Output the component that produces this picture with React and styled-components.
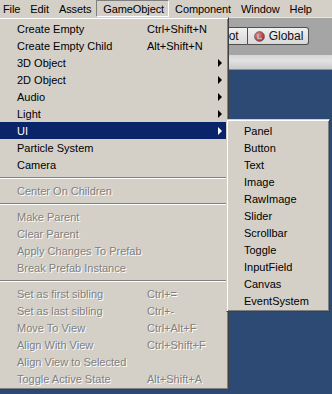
import styled, { createGlobalStyle } from "styled-components"

const GlobalStyle = createGlobalStyle`
  html, body {
    margin: 0;
    padding: 0;
    background: #2d4a74;
  }
  body {
    font-family: "Liberation Sans", Arial, sans-serif;
    font-size: 11px;
  }
`

const Page = styled.div`
  position: relative;
  width: 332px;
  height: 394px;
  overflow: hidden;
  display: flex;
  flex-direction: column;
  background: #2d4a74;
`

const MenuBar = styled.div`
  height: 17px;
  display: flex;
  align-items: stretch;
  margin-left: -2px;
  background: #d4d0c8;
  border-bottom: 1px solid #e8e6e2;
  letter-spacing: -0.1px;
`

const BarItem = styled.div`
  display: flex;
  align-items: center;
  padding: 0 4px;
  color: #000;
  border: 1px solid transparent;
  ${(p) =>
    p.$open &&
    `
    border-color: #808080 #ffffff #ffffff #808080;
    padding: 0 4px 0 6px;
    margin-right: 1px;
  `}
`

const Toolbar = styled.div`
  height: 37px;
  display: flex;
  align-items: flex-start;
  padding-top: 9px;
  padding-left: 203px;
  box-sizing: border-box;
  background: #a5a5a5;
`

const ButtonGroup = styled.div`
  display: flex;
  height: 18px;
`

const ToolButton = styled.div`
  display: flex;
  align-items: center;
  gap: 4px;
  padding: ${(p) => (p.$icon ? "0 5px 0 6px" : "0 8px")};
  color: #111;
  font-size: 12px;
  background: linear-gradient(#f0f0f0, #d8d8d8);
  border: 1px solid #505050;
  border-left: ${(p) => (p.$joined ? "none" : "1px solid #505050")};
  border-radius: ${(p) => (p.$joined ? "0 3px 3px 0" : "3px 0 0 3px")};
`

const SceneStrip = styled.div`
  height: 14px;
  background: linear-gradient(#d6d6d6, #e2e2e2 40%, #cacaca);
  border-bottom: 1px solid #8e8e8e;
`

const SceneView = styled.div`
  flex: 1;
  background: #2d4a74;
`

const Menu = styled.div`
  position: absolute;
  top: ${(p) => p.$top}px;
  left: ${(p) => p.$left}px;
  width: ${(p) => p.$width}px;
  padding: 2px;
  background: #d4d0c8;
  border: 1px solid;
  border-color: #d4d0c8 #404040 #404040 #d4d0c8;
  box-shadow: inset 1px 1px #ffffff, inset -1px -1px #808080;
`

const Row = styled.div`
  height: 17px;
  display: grid;
  grid-template-columns: ${(p) => (p.$sub ? "1fr" : "130px 1fr 10px")};
  align-items: center;
  padding-left: ${(p) => (p.$sub ? 15 : 17)}px;
  white-space: nowrap;
  color: ${(p) => (p.$disabled ? "#808080" : p.$active ? "#ffffff" : "#000000")};
  text-shadow: ${(p) => (p.$disabled ? "1px 1px 0 #ffffff" : "none")};
  background: ${(p) => (p.$active ? "#0a246a" : "transparent")};
`

const Arrow = styled.span`
  width: 0;
  height: 0;
  margin-left: 2px;
  border-top: 4px solid transparent;
  border-bottom: 4px solid transparent;
  border-left: 4px solid ${(p) => (p.$active ? "#ffffff" : "#000000")};
`

const Separator = styled.div`
  height: 9px;
  display: flex;
  align-items: center;

  &::after {
    content: "";
    flex: 1;
    height: 0;
    border-top: 1px solid #808080;
    border-bottom: 1px solid #ffffff;
  }
`

const menuItems = [
  { label: "Create Empty", shortcut: "Ctrl+Shift+N" },
  { label: "Create Empty Child", shortcut: "Alt+Shift+N" },
  { label: "3D Object", sub: true },
  { label: "2D Object", sub: true },
  { label: "Audio", sub: true },
  { label: "Light", sub: true },
  { label: "UI", sub: true, active: true },
  { label: "Particle System" },
  { label: "Camera" },
  { sep: true },
  { label: "Center On Children", disabled: true },
  { sep: true },
  { label: "Make Parent", disabled: true },
  { label: "Clear Parent", disabled: true },
  { label: "Apply Changes To Prefab", disabled: true },
  { label: "Break Prefab Instance", disabled: true },
  { sep: true },
  { label: "Set as first sibling", shortcut: "Ctrl+=", disabled: true },
  { label: "Set as last sibling", shortcut: "Ctrl+-", disabled: true },
  { label: "Move To View", shortcut: "Ctrl+Alt+F", disabled: true },
  { label: "Align With View", shortcut: "Ctrl+Shift+F", disabled: true },
  { label: "Align View to Selected", disabled: true },
  { label: "Toggle Active State", shortcut: "Alt+Shift+A", disabled: true },
]

const uiItems = [
  "Panel",
  "Button",
  "Text",
  "Image",
  "RawImage",
  "Slider",
  "Scrollbar",
  "Toggle",
  "InputField",
  "Canvas",
  "EventSystem",
]

function GlobalIcon() {
  return (
    <svg width="11" height="11" viewBox="0 0 11 11">
      <defs>
        <radialGradient id="ball" cx="0.35" cy="0.35" r="0.7">
          <stop offset="0" stopColor="#e98a8a" />
          <stop offset="1" stopColor="#9c2a2e" />
        </radialGradient>
      </defs>
      <circle cx="5.5" cy="5.5" r="5" fill="url(#ball)" stroke="#6a5a5a" strokeWidth="0.6" />
      <path d="M4 3 V7.5 H8" fill="none" stroke="#b8b8b8" strokeWidth="1.6" />
    </svg>
  )
}

export default function App() {
  return (
    <>
      <GlobalStyle />
      <Page>
        <MenuBar>
          <BarItem>File</BarItem>
          <BarItem>Edit</BarItem>
          <BarItem>Assets</BarItem>
          <BarItem $open>GameObject</BarItem>
          <BarItem>Component</BarItem>
          <BarItem>Window</BarItem>
          <BarItem>Help</BarItem>
        </MenuBar>

        <Toolbar>
          <ButtonGroup>
            <ToolButton>Pivot</ToolButton>
            <ToolButton $icon $joined>
              <GlobalIcon />
              Global
            </ToolButton>
          </ButtonGroup>
        </Toolbar>
        <SceneStrip />
        <SceneView />

        <Menu $top={17} $left={-3} $width={226}>
          {menuItems.map((item, i) =>
            item.sep ? (
              <Separator key={i} />
            ) : (
              <Row key={i} $active={item.active} $disabled={item.disabled}>
                <span>{item.label}</span>
                <span>{item.shortcut}</span>
                {item.sub ? <Arrow $active={item.active} /> : <span />}
              </Row>
            )
          )}
        </Menu>

        <Menu $top={119} $left={226} $width={98}>
          {uiItems.map((label) => (
            <Row key={label} $sub>
              {label}
            </Row>
          ))}
        </Menu>
      </Page>
    </>
  )
}
